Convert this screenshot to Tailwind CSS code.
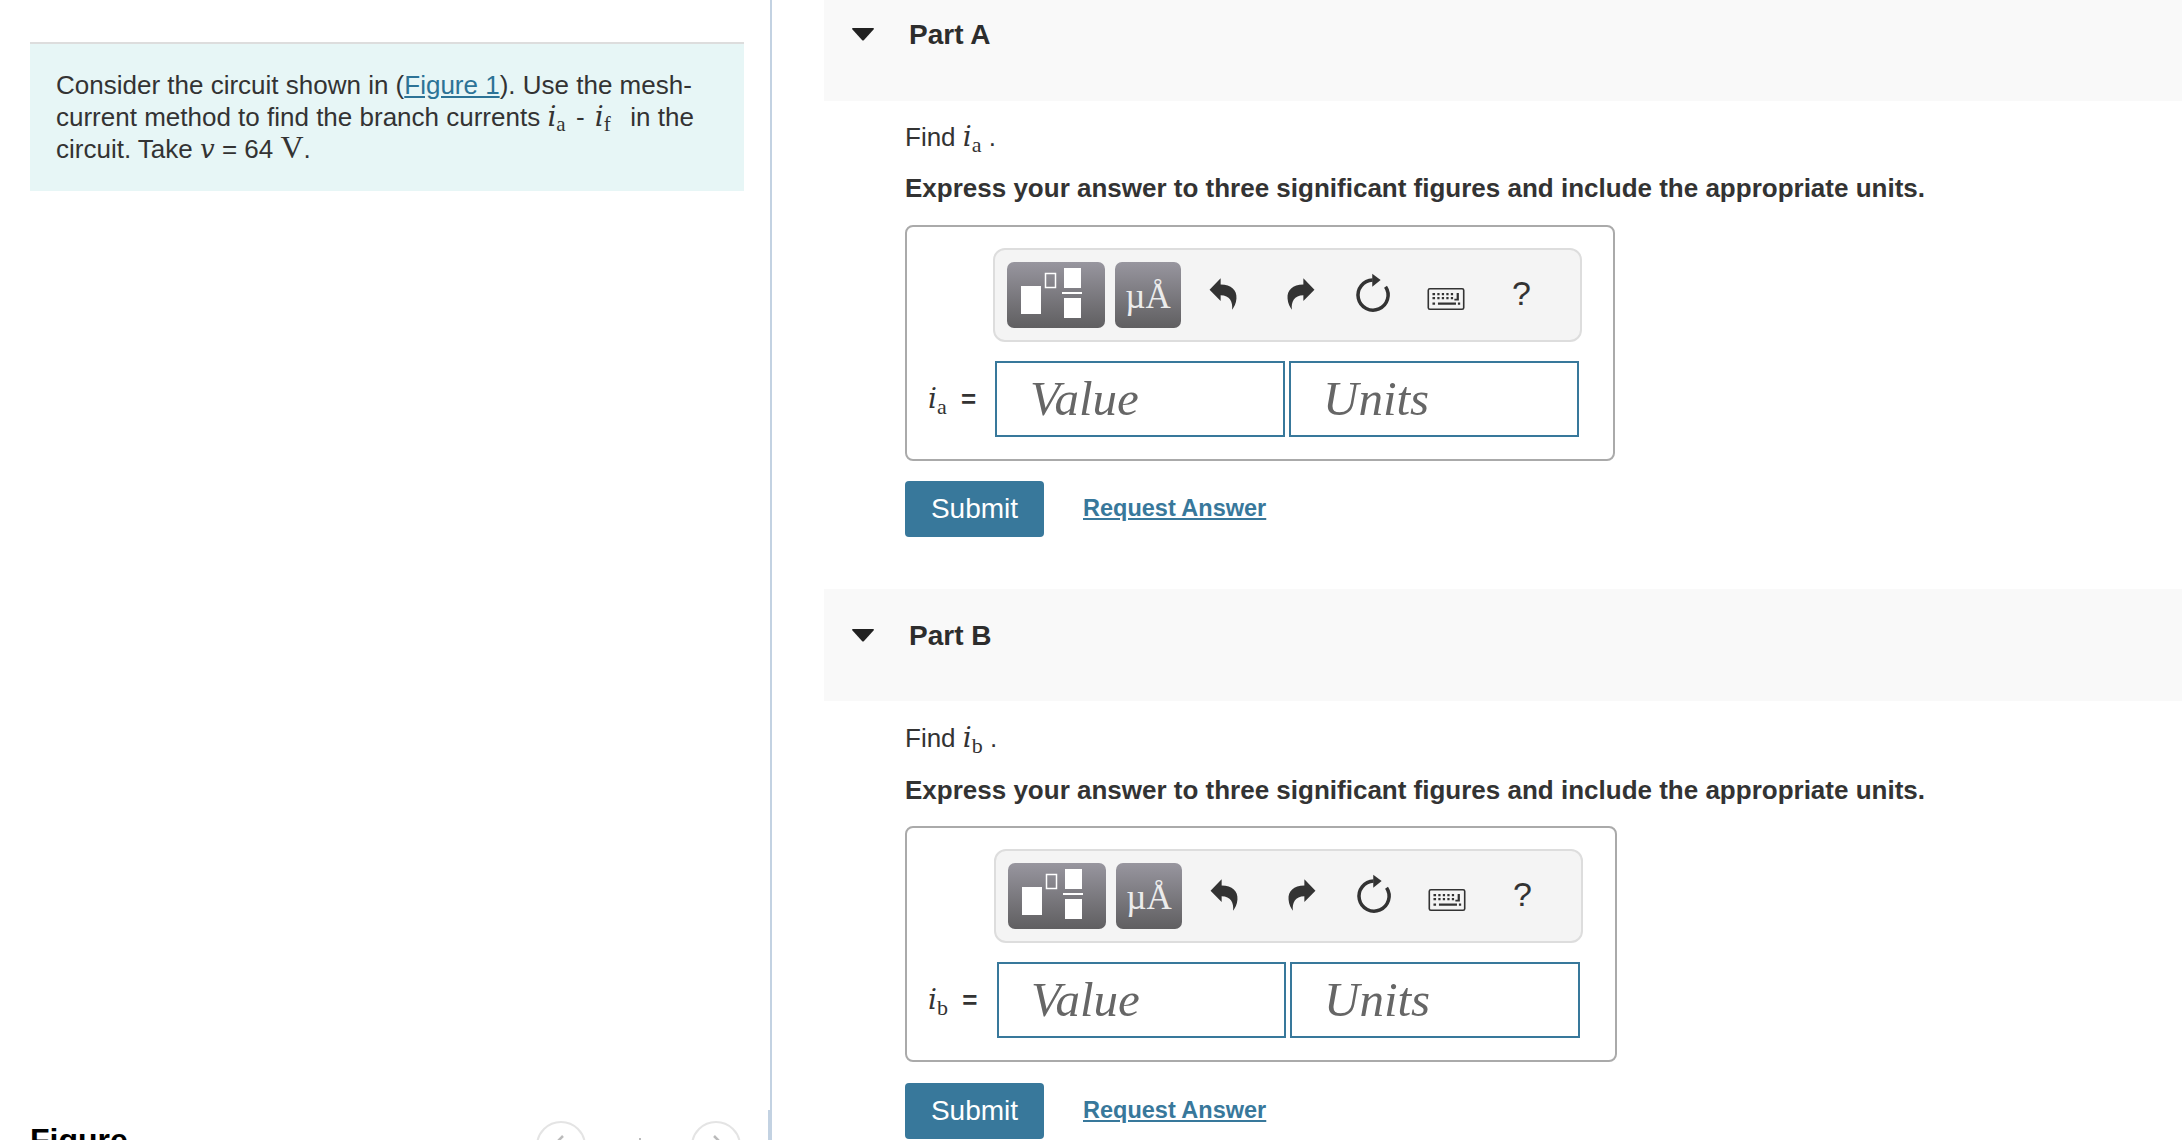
<!doctype html>
<html><head><meta charset="utf-8"><script src="https://cdn.jsdelivr.net/npm/@tailwindcss/browser@4"></script></head>
<body class="m-0 bg-white overflow-hidden">
<div class="flex w-[2182px] h-[1140px] overflow-hidden font-['Liberation_Sans',sans-serif] text-[#333]">
  <aside class="relative w-[772px] shrink-0 h-full border-r-2 border-[#c3d2e2]">
    <div class="mt-[42px] ml-[30px] w-[714px] h-[149px] bg-[#e7f6f6] border-t-2 border-[#dddddd] pt-[25px] pl-[26px] pr-[40px] text-[26px] leading-[32px]">
      Consider the circuit shown in (<a class="text-[#2c7396] underline underline-offset-2">Figure 1</a>). Use the mesh-current method to find the branch currents <i class="font-['DejaVu_Serif',serif] text-[28px] leading-none">i<sub class="not-italic font-['Liberation_Serif',serif] text-[21px]">a</sub></i> <span class="ml-[3px]">-</span> <i class="font-['DejaVu_Serif',serif] text-[28px] leading-none ml-[3px]">i<sub class="not-italic font-['Liberation_Serif',serif] text-[21px]">f</sub></i> &nbsp;<span class="ml-[5px]">in the</span> circuit. Take <i class="font-['DejaVu_Serif',serif] text-[26px] leading-[0]">v</i> = 64 <span class="font-['Liberation_Serif',serif] text-[32px] leading-[0]">V</span>.
    </div>
    <div class="absolute left-[30px] top-[1120px] text-[32px] leading-[40px] font-bold text-black">Figure</div>
    <svg class="absolute left-[535px] top-[1121px]" width="210" height="19" viewBox="0 0 210 19" fill="none">
      <circle cx="26" cy="25" r="24" stroke="#e4e4e4" stroke-width="2"/>
      <circle cx="181" cy="25" r="24" stroke="#e4e4e4" stroke-width="2"/>
      <path d="M28 15 L23 20" stroke="#bbbbbb" stroke-width="2.5"/>
      <path d="M179 15 L184 20" stroke="#bbbbbb" stroke-width="2.5"/>
      <rect x="104" y="17" width="2" height="2" fill="#bbbbbb"/>
    </svg>
    <div class="absolute right-[-2px] top-[1110px] w-[4px] h-[30px] bg-[#c3d2e2]"></div>
  </aside>

  <main class="flex-1 min-w-0 pl-[52px]">
    <!-- Part A -->
    <section>
      <div class="flex items-start h-[101px] bg-[#f9f9f9] pt-[18px]">
        <svg class="ml-[28px] mt-[10px]" width="22" height="13" viewBox="0 0 22 13"><path d="M0 1 Q0 0 1 0 H21 Q22 0 22 1 L12 12 Q11 13 10 12 Z" fill="#222"/></svg>
        <h2 class="ml-[35px] text-[28px] leading-[34px] font-bold text-[#2d2d2d]">Part A</h2>
      </div>
      <div class="pl-[81px]">
        <p class="mt-[20px] text-[26px] leading-[32px]">Find <i class="font-['DejaVu_Serif',serif] text-[28px] leading-none">i<sub class="not-italic font-['Liberation_Serif',serif] text-[22px]">a</sub></i> .</p>
        <p class="mt-[19px] text-[26px] leading-[32px] font-bold">Express your answer to three significant figures and include the appropriate units.</p>
        <div class="mt-[21px] w-[710px] h-[236px] border-2 border-[#aaaaaa] rounded-lg pt-[21px] pl-[86px]">
          <div class="flex items-center w-[589px] h-[94px] bg-[#f4f4f4] border-2 border-[#dddddd] rounded-[12px] pl-[12px]">
            <div class="w-[98px] h-[66px] rounded-[7px] bg-gradient-to-b from-[#98969f] to-[#605f61]">
              <svg width="98" height="66" viewBox="0 0 98 66"><rect x="14" y="24" width="20" height="28" fill="#fff"/><rect x="38.500" y="11.500" width="10" height="14" fill="none" stroke="#fff" stroke-width="1.500"/><rect x="57" y="6" width="17" height="20" fill="#fff"/><rect x="55" y="30" width="20" height="2" fill="#fff"/><rect x="57" y="36" width="17" height="20" fill="#fff"/></svg>
            </div>
            <div class="ml-[10px] flex items-center justify-center w-[66px] h-[66px] rounded-[7px] bg-gradient-to-b from-[#98969f] to-[#605f61] text-[#ececec] font-['Liberation_Serif',serif] text-[35px] leading-[66px] pt-[4px]">µÅ</div>
            <svg class="ml-[25px] -mt-[4px]" width="34" height="37" viewBox="50 60 100 110"><path fill="#333" d="M60 104 L93 70 V88 C125 88 142 105 140 130 C139 145 133 155 127 163 C130 140 120 120 93 120 V137 Z"/></svg>
            <svg class="ml-[44px] -mt-[4px]" width="34" height="37" viewBox="50 60 100 110"><path fill="#333" transform="translate(200 0) scale(-1 1)" d="M60 104 L93 70 V88 C125 88 142 105 140 130 C139 145 133 155 127 163 C130 140 120 120 93 120 V137 Z"/></svg>
            <svg class="ml-[36px] -mt-[4px]" width="40" height="42" viewBox="495 58 114 120"><path fill="none" stroke="#333" stroke-width="10" d="M548 81 A43 43 0 1 0 585 100"/><path fill="#333" d="M547 63 L571 81 L547 100 Z"/></svg>
            <svg class="ml-[33px] mt-[8px]" width="38" height="24" viewBox="712 95 118 74"><rect x="716" y="100" width="110" height="64" rx="5" fill="none" stroke="#333" stroke-width="5"/><path fill="#333" d="M729 113h8v7h-8zM744 113h7v7h-7zM758 113h7v7h-7zM772 113h7v7h-7zM786 113h7v7h-7zM729 126h8v7h-8zM744 126h7v7h-7zM758 126h7v7h-7zM772 126h7v7h-7zM786 126h7v7h-7zM804 113h7v24h-14v-6h7zM729 143h8v7h-8zM746 143h56v7h-56zM808 143h7v7h-7z"/></svg>
            <span class="ml-[47px] -mt-[4px] text-[34px] leading-[40px] text-[#333]">?</span>
          </div>
          <div class="flex items-center -ml-[86px] mt-[19px]">
            <div class="w-[88px] pl-[21px] text-[26px] leading-[32px] whitespace-nowrap"><i class="font-['DejaVu_Serif',serif] text-[28px] leading-none">i<sub class="not-italic font-['Liberation_Serif',serif] text-[22px]">a</sub></i> <span class="font-bold text-[26px] ml-[7px]">=</span></div>
            <div class="w-[290px] h-[76px] border-[2.500px] border-[#38789b] pl-[33px] font-['Liberation_Serif',serif] italic text-[49px] leading-[72px] text-[#666]">Value</div>
            <div class="ml-[4px] w-[290px] h-[76px] border-[2.500px] border-[#38789b] pl-[32px] font-['Liberation_Serif',serif] italic text-[49px] leading-[72px] text-[#666]">Units</div>
          </div>
        </div>
        <div class="flex items-center mt-[20px]">
          <button class="w-[139px] h-[56px] bg-[#38789b] rounded-[4px] text-white text-[28px] leading-[56px]">Submit</button>
          <a class="ml-[39px] text-[#38789b] text-[23.500px] font-bold underline underline-offset-2">Request Answer</a>
        </div>
      </div>
    </section>
    <!-- Part B -->
    <section class="mt-[52px]">
      <div class="flex items-start h-[112px] bg-[#f9f9f9] pt-[30px]">
        <svg class="ml-[28px] mt-[10px]" width="22" height="13" viewBox="0 0 22 13"><path d="M0 1 Q0 0 1 0 H21 Q22 0 22 1 L12 12 Q11 13 10 12 Z" fill="#222"/></svg>
        <h2 class="ml-[35px] text-[28px] leading-[34px] font-bold text-[#2d2d2d]">Part B</h2>
      </div>
      <div class="pl-[81px]">
        <p class="mt-[21px] text-[26px] leading-[32px]">Find <i class="font-['DejaVu_Serif',serif] text-[28px] leading-none">i<sub class="not-italic font-['Liberation_Serif',serif] text-[22px]">b</sub></i> .</p>
        <p class="mt-[20px] text-[26px] leading-[32px] font-bold">Express your answer to three significant figures and include the appropriate units.</p>
        <div class="mt-[20px] w-[712px] h-[236px] border-2 border-[#aaaaaa] rounded-lg pt-[21px] pl-[87px]">
          <div class="flex items-center w-[589px] h-[94px] bg-[#f4f4f4] border-2 border-[#dddddd] rounded-[12px] pl-[12px]">
            <div class="w-[98px] h-[66px] rounded-[7px] bg-gradient-to-b from-[#98969f] to-[#605f61]">
              <svg width="98" height="66" viewBox="0 0 98 66"><rect x="14" y="24" width="20" height="28" fill="#fff"/><rect x="38.500" y="11.500" width="10" height="14" fill="none" stroke="#fff" stroke-width="1.500"/><rect x="57" y="6" width="17" height="20" fill="#fff"/><rect x="55" y="30" width="20" height="2" fill="#fff"/><rect x="57" y="36" width="17" height="20" fill="#fff"/></svg>
            </div>
            <div class="ml-[10px] flex items-center justify-center w-[66px] h-[66px] rounded-[7px] bg-gradient-to-b from-[#98969f] to-[#605f61] text-[#ececec] font-['Liberation_Serif',serif] text-[35px] leading-[66px] pt-[4px]">µÅ</div>
            <svg class="ml-[25px] -mt-[4px]" width="34" height="37" viewBox="50 60 100 110"><path fill="#333" d="M60 104 L93 70 V88 C125 88 142 105 140 130 C139 145 133 155 127 163 C130 140 120 120 93 120 V137 Z"/></svg>
            <svg class="ml-[44px] -mt-[4px]" width="34" height="37" viewBox="50 60 100 110"><path fill="#333" transform="translate(200 0) scale(-1 1)" d="M60 104 L93 70 V88 C125 88 142 105 140 130 C139 145 133 155 127 163 C130 140 120 120 93 120 V137 Z"/></svg>
            <svg class="ml-[36px] -mt-[4px]" width="40" height="42" viewBox="495 58 114 120"><path fill="none" stroke="#333" stroke-width="10" d="M548 81 A43 43 0 1 0 585 100"/><path fill="#333" d="M547 63 L571 81 L547 100 Z"/></svg>
            <svg class="ml-[33px] mt-[8px]" width="38" height="24" viewBox="712 95 118 74"><rect x="716" y="100" width="110" height="64" rx="5" fill="none" stroke="#333" stroke-width="5"/><path fill="#333" d="M729 113h8v7h-8zM744 113h7v7h-7zM758 113h7v7h-7zM772 113h7v7h-7zM786 113h7v7h-7zM729 126h8v7h-8zM744 126h7v7h-7zM758 126h7v7h-7zM772 126h7v7h-7zM786 126h7v7h-7zM804 113h7v24h-14v-6h7zM729 143h8v7h-8zM746 143h56v7h-56zM808 143h7v7h-7z"/></svg>
            <span class="ml-[47px] -mt-[4px] text-[34px] leading-[40px] text-[#333]">?</span>
          </div>
          <div class="flex items-center -ml-[87px] mt-[19px]">
            <div class="w-[90px] pl-[21px] text-[26px] leading-[32px] whitespace-nowrap"><i class="font-['DejaVu_Serif',serif] text-[28px] leading-none">i<sub class="not-italic font-['Liberation_Serif',serif] text-[22px]">b</sub></i> <span class="font-bold text-[26px] ml-[7px]">=</span></div>
            <div class="w-[289px] h-[76px] border-[2.500px] border-[#38789b] pl-[32px] font-['Liberation_Serif',serif] italic text-[49px] leading-[72px] text-[#666]">Value</div>
            <div class="ml-[4px] w-[290px] h-[76px] border-[2.500px] border-[#38789b] pl-[32px] font-['Liberation_Serif',serif] italic text-[49px] leading-[72px] text-[#666]">Units</div>
          </div>
        </div>
        <div class="flex items-center mt-[21px]">
          <button class="w-[139px] h-[56px] bg-[#38789b] rounded-[4px] text-white text-[28px] leading-[56px]">Submit</button>
          <a class="ml-[39px] text-[#38789b] text-[23.500px] font-bold underline underline-offset-2">Request Answer</a>
        </div>
      </div>
    </section>
  </main>
</div>
</body></html>
